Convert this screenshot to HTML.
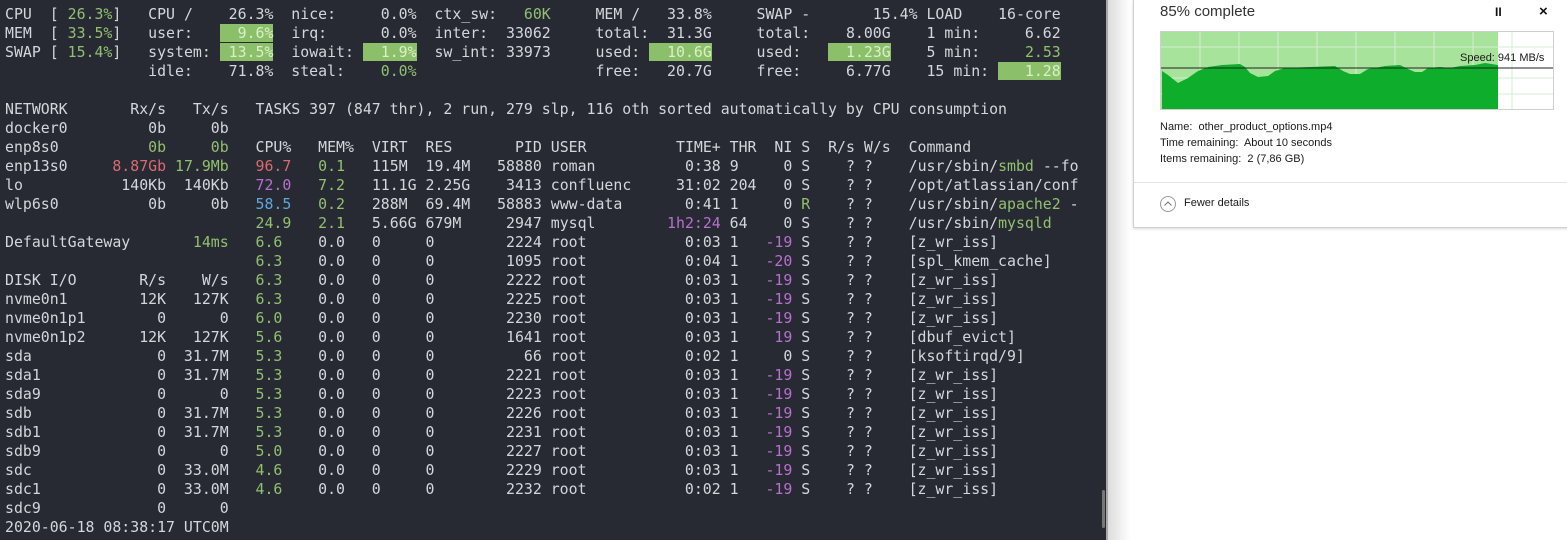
<!DOCTYPE html>
<html><head><meta charset="utf-8"><style>
body{margin:0;width:1567px;height:540px;overflow:hidden;background:#fff;position:relative;font-family:"Liberation Sans",sans-serif}
#term{position:absolute;left:0;top:0;width:1106px;height:540px;background:#272a33}
pre{position:absolute;left:5px;top:5px;margin:0;font-family:"DejaVu Sans Mono","Liberation Mono",monospace;font-size:14.87px;line-height:19px;color:#d3d6dc}
.g{color:#91c06f}.r{color:#d96b72}.m{color:#b96fcf}.b{color:#5ea8dc}
.bg{background:#8cbf69;color:#d9f0c9}
#sep{position:absolute;left:1106px;top:0;width:2px;height:540px;background:#a8a8a8}
#shadow{position:absolute;left:1108px;top:0;width:22px;height:540px;background:linear-gradient(to right,#dcdcdc,#fff)}
#thumb{position:absolute;left:1102px;top:490px;width:3px;height:38px;background:#777;border-radius:2px}
#dlg{position:absolute;left:1133px;top:-1px;width:440px;height:227px;background:#fff;border:1px solid #cfcfcf;box-shadow:0 1px 3px rgba(0,0,0,.15)}
.t{position:absolute;white-space:nowrap;color:#1a1a1a;font-size:11px}
</style></head><body>
<div id="term"><pre>CPU  [<span class="g"> 26.3%</span>]   CPU /    26.3%  nice:     0.0%  ctx_sw:   <span class="g">60K</span>     MEM /   33.8%     SWAP -       15.4% LOAD    16-core
MEM  [<span class="g"> 33.5%</span>]   user:   <span class="bg">  9.6%</span>  irq:      0.0%  inter:  33062     total:  31.3G     total:    8.00G    1 min:     6.62
SWAP [<span class="g"> 15.4%</span>]   system: <span class="bg"> 13.5%</span>  iowait: <span class="bg">  1.9%</span>  sw_int: 33973     used: <span class="bg">  10.6G</span>     used:   <span class="bg">  1.23G</span>    5 min:     <span class="g">2.53</span>
                idle:    71.8%  steal:    <span class="g">0.0%</span>                    free:   20.7G     free:     6.77G    15 min: <span class="bg">   1.28</span>

NETWORK       Rx/s   Tx/s   TASKS 397 (847 thr), 2 run, 279 slp, 116 oth sorted automatically by CPU consumption
docker0         0b     0b
enp8s0          <span class="g">0b</span>     <span class="g">0b</span>   CPU%   MEM%  VIRT  RES       PID USER          TIME+ THR  NI S  R/s W/s  Command
enp13s0     <span class="r">8.87Gb</span> <span class="g">17.9Mb</span>   <span class="r">96.7</span>   <span class="g">0.1</span>   115M  19.4M   58880 roman          0:38 9     0 S    ? ?    /usr/sbin/<span class="g">smbd</span> --fo
lo           140Kb  140Kb   <span class="m">72.0</span>   <span class="g">7.2</span>   11.1G 2.25G    3413 confluenc     31:02 204   0 S    ? ?    /opt/atlassian/conf
wlp6s0          0b     0b   <span class="b">58.5</span>   <span class="g">0.2</span>   288M  69.4M   58883 www-data       0:41 1     0 <span class="g">R</span>    ? ?    /usr/sbin/<span class="g">apache2</span> -
                            <span class="g">24.9</span>   <span class="g">2.1</span>   5.66G 679M     2947 mysql        <span class="m">1h2:24</span> 64    0 S    ? ?    /usr/sbin/<span class="g">mysqld</span>
DefaultGateway       <span class="g">14ms</span>   <span class="g">6.6</span>    0.0   0     0        2224 root           0:03 1   <span class="m">-19</span> S    ? ?    [z_wr_iss]
                            <span class="g">6.3</span>    0.0   0     0        1095 root           0:04 1   <span class="m">-20</span> S    ? ?    [spl_kmem_cache]
DISK I/O       R/s    W/s   <span class="g">6.3</span>    0.0   0     0        2222 root           0:03 1   <span class="m">-19</span> S    ? ?    [z_wr_iss]
nvme0n1        12K   127K   <span class="g">6.3</span>    0.0   0     0        2225 root           0:03 1   <span class="m">-19</span> S    ? ?    [z_wr_iss]
nvme0n1p1        0      0   <span class="g">6.0</span>    0.0   0     0        2230 root           0:03 1   <span class="m">-19</span> S    ? ?    [z_wr_iss]
nvme0n1p2      12K   127K   <span class="g">5.6</span>    0.0   0     0        1641 root           0:03 1    <span class="m">19</span> S    ? ?    [dbuf_evict]
sda              0  31.7M   <span class="g">5.3</span>    0.0   0     0          66 root           0:02 1     0 S    ? ?    [ksoftirqd/9]
sda1             0  31.7M   <span class="g">5.3</span>    0.0   0     0        2221 root           0:03 1   <span class="m">-19</span> S    ? ?    [z_wr_iss]
sda9             0      0   <span class="g">5.3</span>    0.0   0     0        2223 root           0:03 1   <span class="m">-19</span> S    ? ?    [z_wr_iss]
sdb              0  31.7M   <span class="g">5.3</span>    0.0   0     0        2226 root           0:03 1   <span class="m">-19</span> S    ? ?    [z_wr_iss]
sdb1             0  31.7M   <span class="g">5.3</span>    0.0   0     0        2231 root           0:03 1   <span class="m">-19</span> S    ? ?    [z_wr_iss]
sdb9             0      0   <span class="g">5.0</span>    0.0   0     0        2227 root           0:03 1   <span class="m">-19</span> S    ? ?    [z_wr_iss]
sdc              0  33.0M   <span class="g">4.6</span>    0.0   0     0        2229 root           0:03 1   <span class="m">-19</span> S    ? ?    [z_wr_iss]
sdc1             0  33.0M   <span class="g">4.6</span>    0.0   0     0        2232 root           0:02 1   <span class="m">-19</span> S    ? ?    [z_wr_iss]
sdc9             0      0
2020-06-18 08:38:17 UTC0M</pre>
<div id="thumb"></div></div>
<div id="sep"></div><div id="shadow"></div>
<div id="dlg">
<div class="t" style="left:26px;top:3px;font-size:15px;color:#333">85% complete</div>
<div class="t" style="left:361px;top:5px;font-size:12px;font-weight:bold;color:#111">II</div>
<div class="t" style="left:405px;top:3px;font-size:15px;font-weight:bold;color:#111">×</div>
<svg style="position:absolute;left:26px;top:31px" width="394" height="79" viewBox="0 0 394 79">
<rect x="0.5" y="0.5" width="393" height="78" fill="#fff" stroke="#cfcfcf"/>
<rect x="1" y="1" width="337" height="77" fill="#a8e39b"/>
<g stroke="#d6ecd6" stroke-width="1">
<line x1="40" y1="1" x2="40" y2="78"/><line x1="79" y1="1" x2="79" y2="78"/><line x1="118" y1="1" x2="118" y2="78"/><line x1="157" y1="1" x2="157" y2="78"/><line x1="196" y1="1" x2="196" y2="78"/><line x1="235" y1="1" x2="235" y2="78"/><line x1="274" y1="1" x2="274" y2="78"/><line x1="313" y1="1" x2="313" y2="78"/><line x1="352" y1="1" x2="352" y2="78"/>
<line x1="1" y1="16" x2="393" y2="16"/><line x1="1" y1="47" x2="393" y2="47"/><line x1="1" y1="63" x2="393" y2="63"/>
</g>
<polygon fill="#0ead2b" points="2,40 8,44 18,52 28,47 38,40 48,36 62,34 80,33 85,36 90,42 98,46 108,45 115,40 125,37 150,36 175,35 183,40 190,43 200,43 208,38 215,37 225,35 240,34 248,38 255,41 262,41 268,37 280,36 290,37 300,35 315,34 325,32 338,34 338,78 2,78"/>
<line x1="1" y1="37" x2="393" y2="37" stroke="#222" stroke-width="1"/>
</svg>
<div class="t" style="left:326px;top:52px;font-size:11px">Speed: 941 MB/s</div>
<div class="t" style="left:26px;top:121px">Name:&nbsp; other_product_options.mp4</div>
<div class="t" style="left:26px;top:137px">Time remaining:&nbsp; About 10 seconds</div>
<div class="t" style="left:26px;top:153px">Items remaining:&nbsp; 2 (7,86 GB)</div>
<div style="position:absolute;left:0;top:182px;width:440px;height:1px;background:#e3e3e3"></div>
<div style="position:absolute;left:26px;top:196px;width:16px;height:16px;border:1px solid #999;border-radius:50%;box-sizing:border-box"></div>
<svg style="position:absolute;left:26px;top:196px" width="16" height="16"><polyline points="4.5,9.5 8,6 11.5,9.5" fill="none" stroke="#777" stroke-width="1"/></svg>
<div class="t" style="left:50px;top:197px">Fewer details</div>
</div>
</body></html>
